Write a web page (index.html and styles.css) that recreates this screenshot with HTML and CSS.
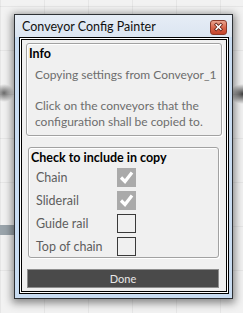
FILE: index.html
```html
<!DOCTYPE html>
<html lang="en">
<head>
  <meta charset="UTF-8"/>
  <title>Conveyor Config Painter</title>
  <link rel="stylesheet" href="styles.css">
</head>
<body>
  <div class="window">
    <div class="titlebar">
      <span class="title">Conveyor Config Painter</span>
      <button class="close" title="Close">
        <svg width="16" height="14" viewBox="0 0 16 14">
          <path d="M5.5 4.5 L10.5 9.5 M10.5 4.5 L5.5 9.5" stroke="#5a1a10" stroke-width="3.2" stroke-linecap="square"/>
          <path d="M5.5 4.5 L10.5 9.5 M10.5 4.5 L5.5 9.5" stroke="#fff" stroke-width="1.6" stroke-linecap="square"/>
        </svg>
      </button>
    </div>
    <div class="client">
      <div class="panel">
        <section class="group info">
          <h2>Info</h2>
          <p>Copying settings from Conveyor_1</p>
          <p class="gap">Click on the conveyors that the<br>configuration shall be copied to.</p>
        </section>
        <section class="group checks">
          <h2>Check to include in copy</h2>
          <label class="row"><span>Chain</span><span class="box on"></span></label>
          <label class="row"><span>Sliderail</span><span class="box on"></span></label>
          <label class="row"><span>Guide rail</span><span class="box"></span></label>
          <label class="row"><span>Top of chain</span><span class="box"></span></label>
        </section>
        <button class="done">Done</button>
      </div>
    </div>
  </div>
</body>
</html>
```

FILE: styles.css
```css
* { box-sizing: border-box; }
html, body { margin: 0; }
body {
  width: 243px; height: 313px; overflow: hidden;
  font-family: Lato, "Noto Sans", sans-serif; font-size: 12px;
  background:
    radial-gradient(ellipse 10px 9px at 4px 93px, #6a6a6a, rgba(100,100,100,0) 100%),
    radial-gradient(ellipse 14px 10px at 243px 94px, #3c3c3c, rgba(60,60,60,0) 100%),
    linear-gradient(#9aa4ab, #9aa4ab) 0 225px / 14px 10px no-repeat,
    linear-gradient(90deg, rgba(0,0,0,.05) 1px, transparent 1px) 0 0 / 44px 44px,
    linear-gradient(rgba(0,0,0,.05) 1px, transparent 1px) 0 6px / 44px 44px,
    #f2f2f2;
  padding: 14px 0 0 14px;
}
.window {
  width: 219px; height: 285px;
  border: 1px solid #2e3135;
  background: #c9dcf1;
  padding: 0 3px 4px 4px;
  display: flex; flex-direction: column;
  box-shadow: 0 2px 8px 2px rgba(0,0,0,.45);
}
.titlebar {
  height: 22px; margin: 0 -3px 0 -4px; padding: 0 5px 0 7px;
  background: linear-gradient(#e6edf6, #dbe5f1);
  display: flex; align-items: center; justify-content: space-between;
}
.title { color: #111; font-size: 12.5px; padding-top: 1px; }
.close {
  width: 17px; height: 15px; margin-top: 2px; padding: 0;
  border: 1px solid #8c3a2a; border-radius: 3px;
  background: linear-gradient(#eaa590, #d9674d 50%, #c4432a);
  display: flex; align-items: center; justify-content: center;
}
.client {
  flex: 1; border: 1px solid #000; padding: 1px; background: #fff;
  display: flex;
}
.panel {
  flex: 1; border: 1px solid #000; background: #f0f0f0;
  display: flex; flex-direction: column;
}
.group {
  border: 1px solid #a2a2a2; border-radius: 3px;
  box-shadow: inset 1px 1px #fff, 1px 1px #fff;
}
.group h2 { margin: 0; font-size: 12.5px; font-weight: 700; color: #000; line-height: 16px; }
.info { margin: 3px 4px 0 4px; height: 93px; padding: 2px 2px 0 2px; }
.info h2 { margin-bottom: 5px; }
.info p { margin: 0 0 0 6px; color: #6d6d6d; line-height: 16px; font-size: 12px; white-space: nowrap; }
.info p.gap { margin-top: 15px; }
.checks { margin: 11px 7px 0 6px; height: 111px; padding: 2px 0 0 2px; }
.checks h2 { line-height: 16px; }
.row {
  display: flex; align-items: center; height: 23px;
  color: #5e5e5e; padding-left: 5px; font-size: 12.5px;
}
.row span:first-child { width: 81px; }
.box { width: 19px; height: 19px; border: 1px solid #3a3a3a; }
.box.on {
  border: none; background: #aaa url("data:image/svg+xml,%3Csvg xmlns='http://www.w3.org/2000/svg' width='19' height='19'%3E%3Cpath d='M4 9.5 L8 13.5 L15 4.5' fill='none' stroke='%23fff' stroke-width='3.2'/%3E%3C/svg%3E");
}
.done {
  margin: 11px 7px 0 5px; height: 19px; padding: 0;
  background: #4a4a4a; border: 1px solid #8e8e8e;
  color: #e8e8e8; font-family: Lato, sans-serif; font-size: 11px;
}
```
